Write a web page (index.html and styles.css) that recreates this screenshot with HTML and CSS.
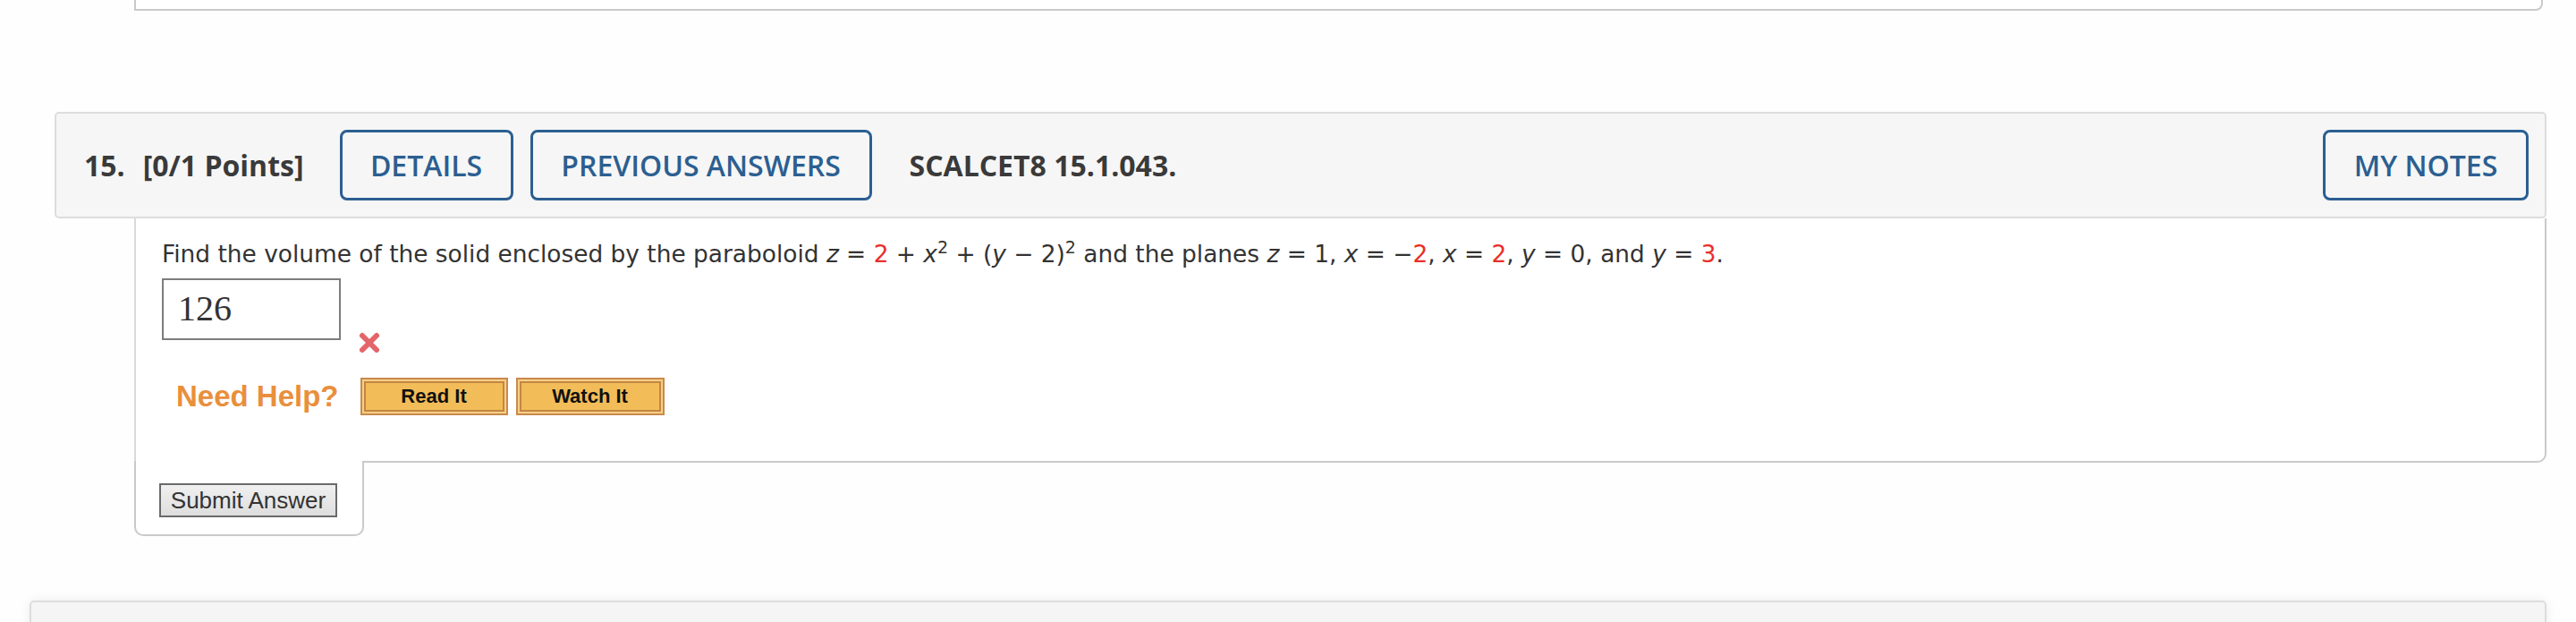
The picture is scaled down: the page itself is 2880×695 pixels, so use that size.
FILE: index.html
```html
<!DOCTYPE html>
<html>
<head>
<meta charset="utf-8">
<link rel="stylesheet" href="styles.css">
</head>
<body>
<div class="prev-card"></div>

<div class="question">
  <div class="q-header">
    <span class="q-num">15.</span>
    <span class="q-points">[0/1 Points]</span>
    <button class="hbtn btn-details">DETAILS</button>
    <button class="hbtn btn-prev">PREVIOUS ANSWERS</button>
    <span class="q-code">SCALCET8 15.1.043.</span>
    <span class="spacer"></span>
    <button class="hbtn btn-notes">MY NOTES</button>
  </div>
  <div class="q-body">
    <p class="q-text">Find the volume of the solid enclosed by the paraboloid <i>z</i> = <span class="red">2</span> + <i>x</i><sup>2</sup> + (<i>y</i> − 2)<sup>2</sup> and the planes <i>z</i> = 1, <i>x</i> = −<span class="red">2</span>, <i>x</i> = <span class="red">2</span>, <i>y</i> = 0, and <i>y</i> = <span class="red">3</span>.</p>
    <div class="answer-row">
      <div class="answer-box">126</div>
      <svg class="wrong" width="26" height="26" viewBox="0 0 26 26" aria-hidden="true">
        <path d="M5 5 L21 21 M21 5 L5 21" stroke="#e3656a" stroke-width="6" stroke-linecap="round"/>
      </svg>
    </div>
    <div class="help-row">
      <span class="need-help">Need Help?</span>
      <button class="help-btn btn-read">Read It</button>
      <button class="help-btn btn-watch">Watch It</button>
    </div>
  </div>
  <div class="submit-tab">
    <button class="submit-btn">Submit Answer</button>
  </div>
</div>

<div class="next-card"></div>
</body>
</html>
```

FILE: styles.css
```css
html, body {
  margin: 0;
  padding: 0;
  background: #fefefe;
}

body {
  width: 2880px;
  height: 695px;
  overflow: hidden;
}

.prev-card {
  margin-left: 150px;
  width: 2689px;
  height: 10px;
  border: 2px solid #cacaca;
  border-top: none;
  border-bottom-right-radius: 8px;
  background: #fff;
}

.question {
  margin: 113px 33px 0 61px;
}

.q-header {
  display: flex;
  align-items: center;
  height: 115px;
  padding: 0 18px 0 31px;
  background: #f6f6f6;
  border: 2px solid #dddddd;
  border-radius: 5px;
  font-family: "Open Sans", sans-serif;
  font-size: 32px;
  font-weight: 700;
  color: #3a3a3a;
  white-space: nowrap;
}

.q-num {
  margin-right: 20px;
}

.q-points {
  margin-right: 40px;
}

.hbtn {
  box-sizing: border-box;
  height: 79px;
  padding: 0;
  border: 3px solid #2b5f91;
  border-radius: 8px;
  background: #f6f6f6;
  font-family: "Open Sans", sans-serif;
  font-size: 32px;
  font-weight: 600;
  color: #2b5f91;
  white-space: nowrap;
}

.btn-details {
  width: 194px;
  margin-right: 19px;
}

.btn-prev {
  width: 382px;
  margin-right: 42px;
}

.btn-notes {
  width: 230px;
}

.spacer {
  flex: 1;
}

.q-body {
  margin-left: 89px;
  padding: 20px 0 51px 29px;
  background: #fff;
  border-left: 2px solid #dadada;
  border-right: 2px solid #cacaca;
  border-bottom: 2px solid #cacaca;
  border-bottom-right-radius: 10px;
}

.q-text {
  margin: 0;
  font-family: "DejaVu Sans", Verdana, sans-serif;
  font-size: 26.4px;
  line-height: 40px;
  color: #333;
  white-space: nowrap;
}

.q-text i {
  font-style: italic;
}

.q-text sup {
  font-size: 0.72em;
  line-height: 0;
  vertical-align: 0.55em;
}

.red {
  color: #e8302a;
}

.answer-row {
  display: flex;
  align-items: flex-start;
  margin-top: 7px;
}

.answer-box {
  box-sizing: border-box;
  width: 200px;
  height: 69px;
  padding: 8px 0 0 16px;
  border: 2px solid #7d7d7d;
  font-family: "Liberation Serif", "Times New Roman", serif;
  font-size: 40px;
  line-height: 48px;
  color: #333;
  background: #fff;
}

.wrong {
  margin: 59px 0 0 19px;
  filter: blur(0.4px);
}

.help-row {
  display: flex;
  align-items: center;
  margin-top: 26px;
  padding-left: 16px;
}

.need-help {
  font-family: "Liberation Sans", Arial, sans-serif;
  font-size: 33px;
  font-weight: 700;
  color: #e98f3c;
  margin-right: 24px;
}

.help-btn {
  box-sizing: border-box;
  height: 42px;
  padding: 0;
  border: 2px solid #c88a4c;
  background: #f2bd58;
  box-shadow: inset 0 0 0 2px #f7cf85, inset 0 0 0 4px #c38644;
  font-family: "Liberation Sans", Arial, sans-serif;
  font-size: 22px;
  font-weight: 700;
  color: #111;
}

.btn-read {
  width: 165px;
  margin-right: 9px;
}

.btn-watch {
  width: 166px;
}

.submit-tab {
  box-sizing: border-box;
  width: 257px;
  margin: -2px 0 0 89px;
  padding: 25px 0 19px 26px;
  background: #fff;
  border: 2px solid #cacaca;
  border-top: none;
  border-radius: 0 0 10px 10px;
  position: relative;
}

.submit-btn {
  box-sizing: border-box;
  width: 199px;
  height: 38px;
  padding: 0;
  border: 2px solid #6a6a6a;
  background: linear-gradient(#f0f0f0, #dedede);
  font-family: "Liberation Sans", Arial, sans-serif;
  font-size: 26px;
  color: #333;
}

.next-card {
  margin: 72px 33px 0 33px;
  height: 60px;
  background: #f5f5f5;
  border: 2px solid #dddddd;
  border-radius: 5px;
  box-shadow: 0 0 12px rgba(0, 0, 0, 0.08);
}
```
